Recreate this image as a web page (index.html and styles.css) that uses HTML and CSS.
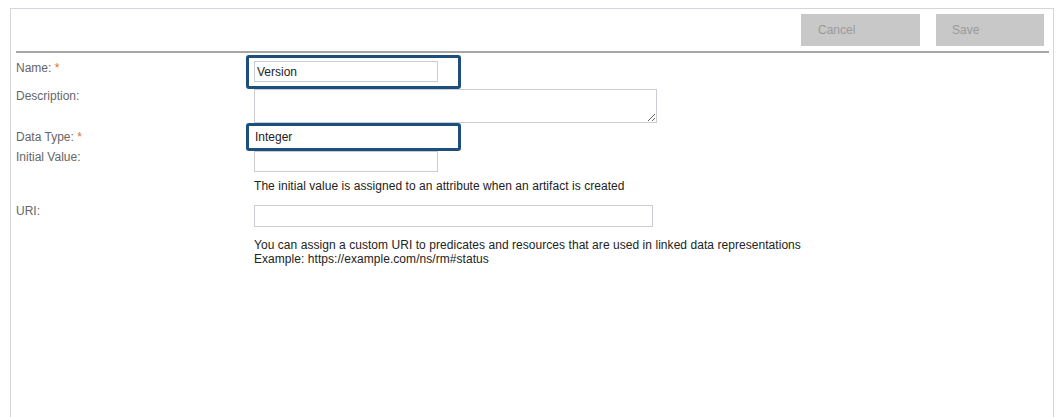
FILE: index.html
```html
<!DOCTYPE html>
<html>
<head>
<meta charset="utf-8">
<link rel="stylesheet" href="styles.css">
</head>
<body>
<div class="frame">
  <div class="header">
    <button class="btn btn-cancel">Cancel</button>
    <button class="btn btn-save">Save</button>
  </div>
  <div class="form">
    <div class="label row-name">Name: <span class="req">*</span></div>
    <div class="field row-name">
      <div class="hl-wrap">
        <input class="input short" type="text" value="Version">
        <span class="hl hl-name"></span>
      </div>
    </div>

    <div class="label row-desc">Description:</div>
    <div class="field row-desc">
      <textarea class="textarea"></textarea>
    </div>

    <div class="label row-type">Data Type: <span class="req">*</span></div>
    <div class="field row-type">
      <div class="hl-wrap">
        <div class="value">Integer</div>
        <span class="hl hl-type"></span>
      </div>
    </div>

    <div class="label row-init">Initial Value:</div>
    <div class="field row-init">
      <input class="input short" type="text">
      <div class="help help-init">The initial value is assigned to an attribute when an artifact is created</div>
    </div>

    <div class="label row-uri">URI:</div>
    <div class="field row-uri">
      <input class="input long" type="text">
      <div class="help help-uri">You can assign a custom URI to predicates and resources that are used in linked data representations<br>Example: https://example.com/ns/rm#status</div>
    </div>
  </div>
</div>
</body>
</html>
```

FILE: styles.css
```css
* { box-sizing: border-box; }
html, body { margin: 0; padding: 0; background: #fff; }
body {
  font-family: "Liberation Sans", Arial, sans-serif;
  font-size: 12px;
  line-height: 14px;
  color: #333;
  overflow: hidden;
}
.frame {
  margin: 8px 8px 0 10px;
  border: 1px solid #d3d6dd;
  border-bottom: none;
  height: 420px;
}
.header {
  height: 44px;
  margin: 0 4px 0 5px;
  padding: 5px 5px 0 0;
  border-bottom: 2px solid #a6a6a6;
  display: flex;
  justify-content: flex-end;
  align-items: flex-start;
  gap: 16px;
}
.btn {
  height: 32px;
  border: none;
  background: #c8c8c8;
  color: #9a9a9a;
  font-family: "Liberation Sans", Arial, sans-serif;
  font-size: 12px;
  text-align: left;
  padding: 0 0 0 17px;
  margin: 0;
}
.btn-cancel { width: 119px; }
.btn-save { width: 108px; padding-left: 16px; }

.form {
  display: grid;
  grid-template-columns: 238px 1fr;
  padding: 8px 0 0 5px;
}
.label { color: #666; }
.req { color: #e8702a; }

.row-name.label { margin-top: 0; }
.row-desc { margin-top: 7px; }
.row-type { margin-top: 7px; }
.row-init { margin-top: 7px; }
.row-init.label { margin-top: 6px; }
.row-uri { margin-top: 12px; }
.row-uri.label { margin-top: 11px; }

.hl-wrap { position: relative; width: 184px; }
.hl {
  position: absolute;
  border: 3px solid #1d4f7c;
  border-radius: 3px;
  pointer-events: none;
}
.hl-name { left: -8px; top: -6px; width: 215px; height: 34px; }
.hl-type { left: -8px; top: -7px; width: 215px; height: 28px; }

.input {
  display: block;
  height: 21px;
  border: 1px solid #c9ccd3;
  padding: 1px 2px;
  font-family: "Liberation Sans", Arial, sans-serif;
  font-size: 12px;
  color: #222;
  outline: none;
  margin: 0;
}
.input.short { width: 184px; }
.input.long { width: 399px; height: 22px; }
.textarea {
  display: block;
  width: 403px;
  height: 34px;
  border: 1px solid #c9ccd3;
  margin: 0;
  padding: 2px;
  resize: both;
  font-family: "Liberation Sans", Arial, sans-serif;
  font-size: 12px;
}
.value { color: #222; height: 14px; padding-left: 1px; }
.help { color: #222; letter-spacing: 0.05px; }
.help-init { margin-top: 7px; }
.help-uri { margin-top: 11px; }
```
